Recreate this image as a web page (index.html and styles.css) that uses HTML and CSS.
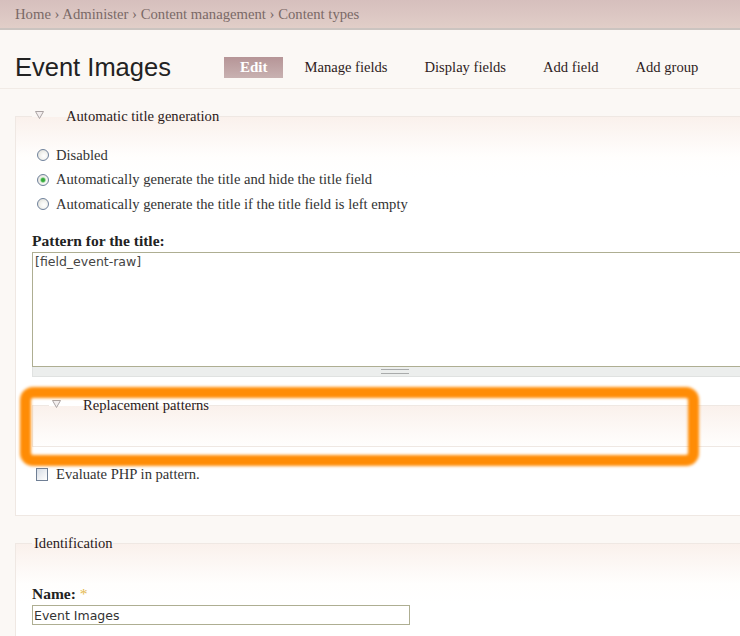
FILE: index.html
```html
<!DOCTYPE html>
<html>
<head>
<meta charset="utf-8">
<title>Event Images</title>
<link rel="stylesheet" href="styles.css">
</head>
<body>
<div class="header">
  <div class="crumbs"><a>Home</a> › <a>Administer</a> › <a>Content management</a> › <a>Content types</a></div>
</div>
<div class="titlebar">
  <h1 class="title">Event Images</h1>
  <ul class="tabs">
    <li class="tab active">Edit</li>
    <li class="tab">Manage fields</li>
    <li class="tab">Display fields</li>
    <li class="tab">Add field</li>
    <li class="tab">Add group</li>
  </ul>
</div>
<div class="content">
  <fieldset class="fs fs-main">
    <legend class="lg"><svg class="tri" width="9" height="8" viewBox="0 0 9 8"><polygon points="0.5,0.5 8.5,0.5 4.5,7.5" fill="#f3eeee" stroke="#aaa3a3" stroke-width="1"/></svg><span class="lg-text">Automatic title generation</span></legend>
    <div class="radios">
      <label class="opt"><input class="radio" type="radio" name="t"><span>Disabled</span></label>
      <label class="opt"><input class="radio" type="radio" name="t" checked><span>Automatically generate the title and hide the title field</span></label>
      <label class="opt"><input class="radio" type="radio" name="t"><span>Automatically generate the title if the title field is left empty</span></label>
    </div>
    <label class="fl">Pattern for the title:</label>
    <div class="ta-wrap">
      <textarea class="ta">[field_event-raw]</textarea>
      <div class="grippie"><span class="grip"></span></div>
    </div>
    <fieldset class="fs fs-nested">
      <legend class="lg"><svg class="tri" width="9" height="8" viewBox="0 0 9 8"><polygon points="0.5,0.5 8.5,0.5 4.5,7.5" fill="#f3eeee" stroke="#aaa3a3" stroke-width="1"/></svg><span class="lg-text">Replacement patterns</span></legend>
    </fieldset>
    <label class="opt chk-row"><input class="chk" type="checkbox"><span>Evaluate PHP in pattern.</span></label>
  </fieldset>
  <fieldset class="fs fs-id">
    <legend class="lg lg-plain"><span>Identification</span></legend>
    <label class="fl">Name: <span class="req">*</span></label>
    <input class="txt" type="text" value="Event Images">
  </fieldset>
</div>
<div class="highlight"></div>
</body>
</html>
```
FILE: styles.css
```css
html, body {
  margin: 0;
  padding: 0;
  overflow: hidden;
}
body {
  background: #fbf8f5;
  font-family: "Liberation Serif", "Times New Roman", serif;
  font-size: 14.6px;
  color: #333;
  position: relative;
  width: 740px;
  height: 636px;
}
.header {
  height: 28px;
  background: linear-gradient(#d6bfbd, #e1cec8);
  border-bottom: 2px solid #cbc4c0;
  padding-left: 15px;
  box-sizing: content-box;
}
.crumbs {
  line-height: 28px;
  color: #7a6967;
  font-size: 14.7px;
  white-space: nowrap;
}
.titlebar {
  display: flex;
  align-items: center;
  padding: 22px 0 6px 15px;
  border-bottom: 1px solid #f1ebe6;
}
.title {
  margin: 0;
  font-family: "Liberation Sans", Arial, sans-serif;
  font-weight: normal;
  font-size: 25.5px;
  line-height: 30px;
  color: #222;
}
.tabs {
  display: flex;
  list-style: none;
  margin: 0 0 0 53px;
  padding: 0;
}
.tab {
  font-size: 14.6px;
  line-height: 21px;
  padding: 0 17px;
  margin-right: 3px;
  color: #2f1c1c;
  white-space: nowrap;
}
.tab.active {
  background: linear-gradient(#b69597, #c8b1b1);
  color: #fff;
  font-weight: bold;
  font-size: 15px;
  padding: 0 16px;
  margin-right: 4px;
}
.content {
  width: 800px;
}
.fs {
  border: 1px solid #efe8e3;
  margin: 0;
  padding: 0 16px;
  background: linear-gradient(#faf1ec 0, #fffefd 40px, #fff 60px);
  min-width: 0;
}
.fs-main {
  margin: 18px 0 0 15px;
  padding-top: 18px;
  padding-bottom: 32px;
}
.lg {
  padding: 0;
  line-height: 18px;
  height: 18px;
  display: flex;
  align-items: center;
  color: #2b1b1b;
  font-size: 14.6px;
}
.tri {
  display: block;
  margin-left: 3px;
  margin-top: -3px;
}
.lg-text {
  margin-left: 22px;
}
.lg-plain {
  padding-left: 2px;
}
.radios {
  display: flex;
  flex-direction: column;
}
.opt {
  display: flex;
  align-items: center;
  height: 24.5px;
  color: #333;
  white-space: nowrap;
}
.radio {
  appearance: none;
  -webkit-appearance: none;
  width: 12px;
  height: 12px;
  margin: 0 7px 0 5px;
  border: 1px solid #6f819b;
  border-radius: 50%;
  box-sizing: border-box;
  background: radial-gradient(circle at 60% 60%, #fff 0, #f4f4f0 40%, #d8d8d2 100%);
  flex: none;
}
.radio:checked {
  background: radial-gradient(circle, #2c9e32 0, #45b34a 1.8px, #b5e0b5 2.6px, rgba(255,255,255,0) 3.2px), radial-gradient(circle at 60% 60%, #fff 0, #f4f4f0 40%, #d8d8d2 100%);
}
.fl {
  display: block;
  font-weight: bold;
  font-size: 15.5px;
  color: #222;
  line-height: 18px;
  margin-top: 15.5px;
  white-space: nowrap;
}
.ta-wrap {
  margin-top: 2px;
  width: 760px;
}
.ta {
  display: block;
  box-sizing: border-box;
  width: 100%;
  height: 115px;
  margin: 0;
  border: 1px solid #aeae92;
  padding: 1px 2px;
  font-family: "DejaVu Sans", Verdana, sans-serif;
  font-size: 12.5px;
  line-height: 15px;
  color: #444;
  resize: none;
  background: #fff;
}
.grippie {
  height: 9px;
  background: #eceeed;
  border: 1px solid #e0e2e1;
  border-top: none;
  display: flex;
  justify-content: flex-start;
  align-items: center;
  padding-left: 348px;
}
.grip {
  display: block;
  width: 28px;
  height: 3px;
  border-top: 1px solid #a9abab;
  border-bottom: 1px solid #a9abab;
}
.fs-nested {
  margin-top: 19px;
  padding-bottom: 32px;
  width: 760px;
  box-sizing: border-box;
}
.chk-row {
  margin-top: 18px;
  height: 18px;
}
.chk {
  appearance: none;
  -webkit-appearance: none;
  width: 12px;
  height: 13px;
  margin: 0 8px 0 4px;
  border: 1px solid #6f7f95;
  box-sizing: border-box;
  background: linear-gradient(135deg, #d6dde6 0, #eef0f3 55%, #fff 100%);
  flex: none;
}
.fs-id {
  margin: 18px 0 0 15px;
  padding-top: 33px;
  padding-bottom: 30px;
}
.fs-id .fl {
  margin-top: 0;
}
.req {
  color: #e3b84e;
  font-weight: normal;
}
.txt {
  display: block;
  margin-top: 2px;
  box-sizing: border-box;
  width: 378px;
  height: 20px;
  border: 1px solid #aeae92;
  padding: 0 1px;
  font-family: "DejaVu Sans", Verdana, sans-serif;
  font-size: 12.5px;
  color: #333;
  background: #fff;
}
.highlight {
  position: absolute;
  left: 20px;
  top: 387px;
  width: 679px;
  height: 79px;
  box-sizing: border-box;
  border: 11px solid #ff8c05;
  border-radius: 13px;
  filter: blur(1.4px);
  pointer-events: none;
}
```
